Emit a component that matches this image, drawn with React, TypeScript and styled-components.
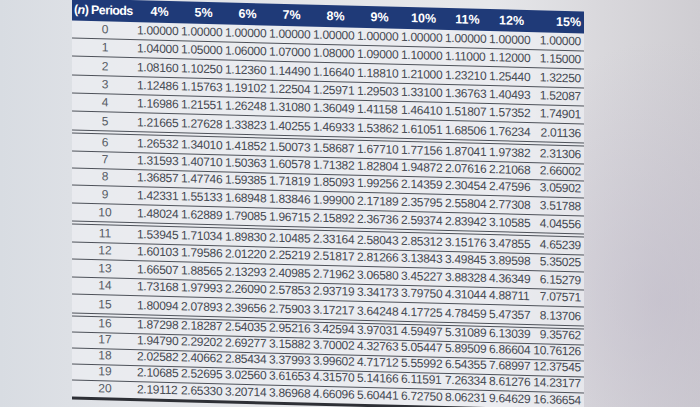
import React from "react";
import styled, { createGlobalStyle } from "styled-components";

const GlobalStyle = createGlobalStyle`
  html, body {
    margin: 0;
    padding: 0;
    width: 700px;
    height: 407px;
    overflow: hidden;
  }
`;

const colors = {
  navy: "#1f3a78",
  text: "#454952",
  label: "#575c65",
  line: "#4e525a",
};

const rates = [4, 5, 6, 7, 8, 9, 10, 11, 12, 15];

// period groups with the row pitch each one has in the photo
const groups = [
  { periods: [0, 1, 2, 3, 4, 5], rowHeight: 18.2 },
  { periods: [6, 7, 8, 9, 10], rowHeight: 17.4 },
  { periods: [11, 12, 13, 14, 15], rowHeight: 17.5 },
  { periods: [16, 17, 18, 19, 20], rowHeight: 16 },
];

const factor = (rate: number, n: number) =>
  Math.pow(1 + rate / 100, n).toFixed(5);

const Page = styled.div`
  width: 700px;
  height: 407px;
  box-sizing: border-box;
  padding: 5px 0 0 72px;
  overflow: hidden;
  background:
    radial-gradient(ellipse 180px 260px at 660px 300px, rgba(190, 184, 200, 0.55), transparent),
    linear-gradient(to right, #d8dce2 0%, #e2e4e8 20%, #e6e7ea 70%, #d9d8dc 86%, #cfcdd2 100%);
  font-family: "Liberation Sans", Arial, sans-serif;
`;

const Table = styled.div`
  width: 512px;
  background: rgba(236, 238, 241, 0.75);
  transform: skewY(1.45deg);
  transform-origin: 256px 0;
`;

const Columns = styled.div`
  display: grid;
  grid-template-columns: 64px repeat(9, 44px) 1fr;
`;

const HeaderRow = styled(Columns)`
  height: 22px;
  background: ${colors.navy};
  color: #ffffff;
  font-size: 12.5px;
  font-weight: 700;
  align-items: center;
`;

const HeadCell = styled.div<{ $align?: "left" | "center" | "right" }>`
  text-align: ${(p) => p.$align || "center"};
  padding: ${(p) =>
    p.$align === "left" ? "0 0 0 2px" : p.$align === "right" ? "0 3px 0 0" : "0 0 0 3px"};
  letter-spacing: ${(p) => (p.$align === "left" ? "-0.6px" : "0")};
  white-space: nowrap;
`;

const Group = styled.div<{ $last?: boolean }>`
  border-bottom: ${(p) =>
    p.$last ? `3px solid #2e3036` : `4px double ${colors.line}`};
`;

const Row = styled(Columns)<{ $height: number; $end?: boolean }>`
  height: ${(p) => p.$height}px;
  box-sizing: border-box;
  border-bottom: ${(p) => (p.$end ? "none" : `1px solid ${colors.line}`)};
  font-size: 12px;
  line-height: 12px;
`;

const Cell = styled.div<{ $kind: "label" | "value" | "wide" }>`
  display: flex;
  align-items: flex-end;
  justify-content: ${(p) =>
    p.$kind === "label" ? "center" : p.$kind === "wide" ? "flex-end" : "flex-start"};
  padding: ${(p) =>
    p.$kind === "wide" ? "0 3px 3px 0" : p.$kind === "value" ? "0 0 3px 1px" : "0 0 3px 2px"};
  color: ${(p) => (p.$kind === "label" ? colors.label : colors.text)};
  letter-spacing: ${(p) => (p.$kind === "label" ? "0" : "-0.3px")};
  white-space: nowrap;
`;

function App() {
  return (
    <Page>
      <GlobalStyle />
      <Table>
        <HeaderRow>
          <HeadCell $align="left">
            (<i>n</i>) Periods
          </HeadCell>
          {rates.map((r, i) => (
            <HeadCell key={r} $align={i === rates.length - 1 ? "right" : "center"}>
              {r}%
            </HeadCell>
          ))}
        </HeaderRow>
        {groups.map((g, gi) => (
          <Group key={gi} $last={gi === groups.length - 1}>
            {g.periods.map((n, ri) => (
              <Row key={n} $height={g.rowHeight} $end={ri === g.periods.length - 1}>
                <Cell $kind="label">{n}</Cell>
                {rates.map((r, i) => (
                  <Cell key={r} $kind={i === rates.length - 1 ? "wide" : "value"}>
                    {factor(r, n)}
                  </Cell>
                ))}
              </Row>
            ))}
          </Group>
        ))}
      </Table>
    </Page>
  );
}

export default App;
